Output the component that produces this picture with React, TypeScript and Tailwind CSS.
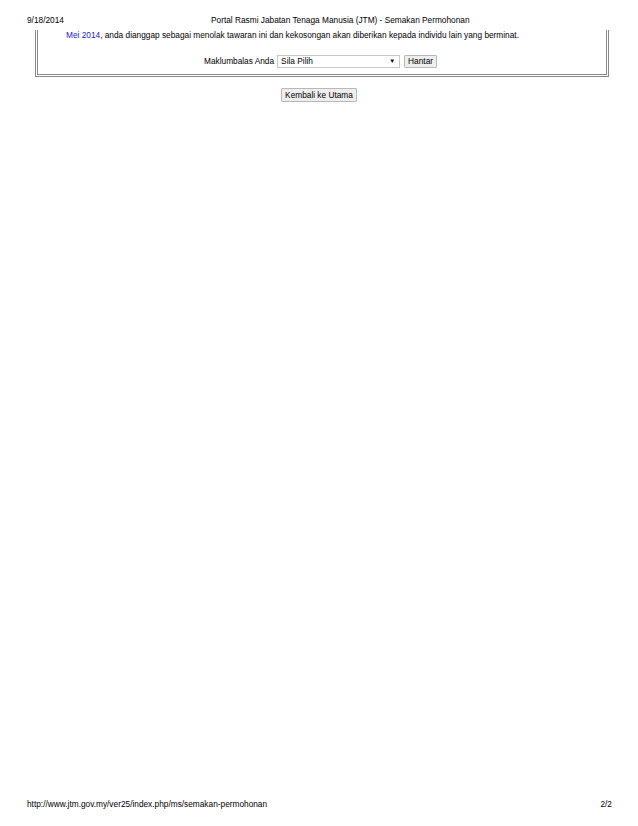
import React from "react";

const font = { fontFamily: '"Liberation Sans", Arial, sans-serif' };

export default function App() {
  return (
    <div className="w-[638px] h-[826px] bg-white text-black relative overflow-hidden text-[8.3px] leading-none" style={font}>
      {/* print header */}
      <div className="flex px-[27px] pt-[16px]">
        <span className="w-[140px]">9/18/2014</span>
        <span className="ml-[44px]">Portal Rasmi Jabatan Tenaga Manusia (JTM) - Semakan Permohonan</span>
      </div>

      {/* bottom of the results box carried over from page 1 */}
      <div className="ml-[35px] mr-[29px] mt-[6px] h-[47px] border-x-[3px] border-b-[3px] border-double border-[#8a8a8a]">
        <p className="pl-[28px] pt-[1px]">
          <a className="text-[#2020d8]">Mei 2014</a>, anda dianggap sebagai menolak tawaran ini dan kekosongan akan diberikan kepada individu lain yang berminat.
        </p>
        <div className="flex items-center mt-[15px] pl-[166px]">
          <span className="mr-[3px]">Maklumbalas Anda</span>
          <div className="w-[123px] h-[13px] border border-[#c8c8c8] flex items-center justify-between px-[3px]">
            <span>Sila Pilih</span>
            <span className="text-[6px] mr-[1px]">▼</span>
          </div>
          <button className="ml-[4px] h-[13px] px-[3px] border border-[#b8b8b8] bg-[#eeeeee] rounded-[1px]">Hantar</button>
        </div>
      </div>

      <div className="flex justify-center mt-[11px]">
        <button className="h-[14px] px-[3px] border border-[#b8b8b8] bg-[#eeeeee] rounded-[1px]">Kembali ke Utama</button>
      </div>

      {/* print footer */}
      <div className="absolute left-[27px] right-[26px] top-[800px] flex justify-between">
        <span>http://www.jtm.gov.my/ver25/index.php/ms/semakan-permohonan</span>
        <span>2/2</span>
      </div>
    </div>
  );
}
